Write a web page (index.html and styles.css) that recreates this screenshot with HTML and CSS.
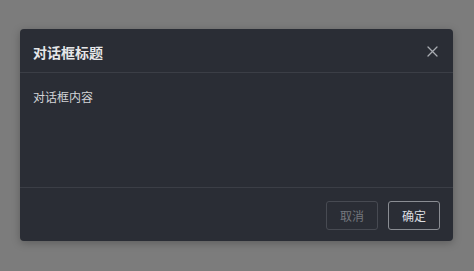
FILE: index.html
```html
<!DOCTYPE html>
<html lang="zh-CN">
<head>
<meta charset="utf-8">
<link rel="stylesheet" href="styles.css">
</head>
<body>
<div class="overlay">
  <div class="dialog">
    <div class="dialog-header">
      <span class="dialog-title">对话框标题</span>
      <button class="close-btn" aria-label="关闭">
        <svg width="11" height="11" viewBox="0 0 11 11"><path d="M1 1L10 10M10 1L1 10" stroke="#a9acb2" stroke-width="1.3" fill="none" stroke-linecap="round"/></svg>
      </button>
    </div>
    <div class="dialog-body">对话框内容</div>
    <div class="dialog-footer">
      <button class="btn btn-disabled">取消</button>
      <button class="btn btn-primary">确定</button>
    </div>
  </div>
</div>
</body>
</html>
```

FILE: styles.css
```css
* { box-sizing: border-box; }
html, body { margin: 0; padding: 0; }
body {
  width: 474px;
  height: 271px;
  background: #7c7c7c;
  font-family: "Noto Sans CJK SC", "Noto Sans", sans-serif;
  overflow: hidden;
}
.overlay {
  padding: 29px 21px 30px 20px;
}
.dialog {
  width: 433px;
  height: 212px;
  background: #2a2d35;
  border-radius: 4px;
  display: flex;
  flex-direction: column;
  box-shadow: 0 2px 8px rgba(0,0,0,0.25);
}
.dialog-header {
  height: 44px;
  border-bottom: 1px solid #3b3e46;
  display: flex;
  align-items: center;
  justify-content: space-between;
  padding: 0 14px 0 13px;
}
.dialog-title {
  color: #e6e7e9;
  font-size: 14px;
  font-weight: 700;
  line-height: 20px;
  padding-top: 2px;
}
.close-btn {
  background: none;
  border: 0;
  padding: 0;
  width: 14px;
  height: 14px;
  display: flex;
  align-items: center;
  justify-content: center;
  margin-top: 1px;
}
.dialog-body {
  flex: 1;
  padding: 15px 13px;
  color: #d3d4d7;
  font-size: 12px;
  line-height: 18px;
}
.dialog-footer {
  border-top: 1px solid #3b3e46;
  display: flex;
  justify-content: flex-end;
  gap: 10px;
  padding: 13px 13px 11px;
}
.btn {
  height: 29px;
  width: 52px;
  padding: 0;
  border-radius: 3px;
  background: transparent;
  font-family: inherit;
  font-size: 12px;
  line-height: 1;
}
.btn-disabled {
  border: 1px solid #474a52;
  color: #74777d;
}
.btn-primary {
  border: 1px solid #8a8d93;
  color: #dcdde0;
}
```
